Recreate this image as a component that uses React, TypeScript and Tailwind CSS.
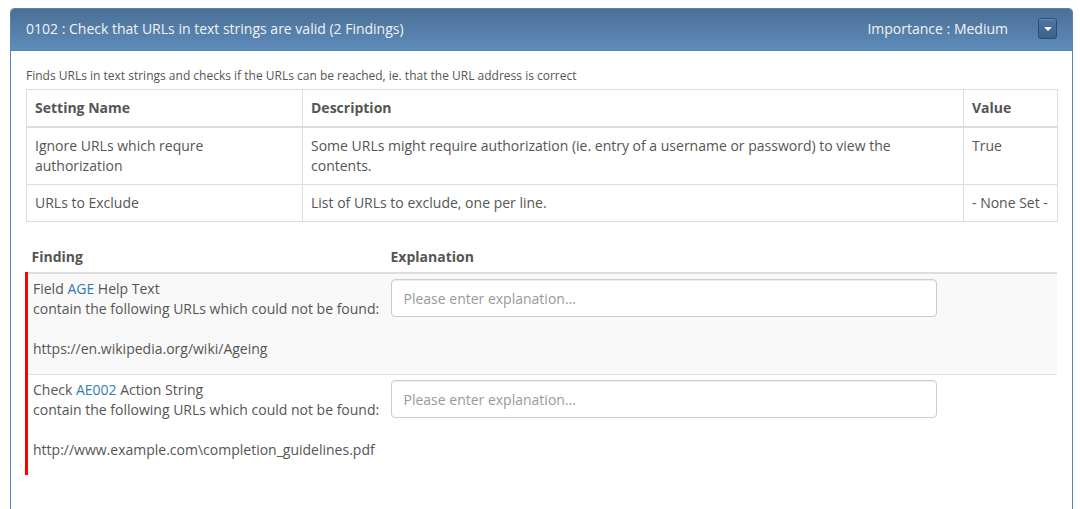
export default function App() {
  const settings = [
    {
      name: "Ignore URLs which requre authorization",
      desc: "Some URLs might require authorization (ie. entry of a username or password) to view the contents.",
      value: "True",
    },
    { name: "URLs to Exclude", desc: "List of URLs to exclude, one per line.", value: "- None Set -" },
  ];

  const findings = [
    { kind: "Field", code: "AGE", what: "Help Text", url: "https://en.wikipedia.org/wiki/Ageing", striped: true },
    { kind: "Check", code: "AE002", what: "Action String", url: "http://www.example.com\\completion_guidelines.pdf", striped: false },
  ];

  return (
    <div className="min-h-screen bg-white pt-2 text-[14px] leading-[20px] text-[#555]" style={{ fontFamily: '"Open Sans", "Liberation Sans", sans-serif' }}>
      <div className="ml-[10px] w-[1063px] rounded-t-[4px] border border-[#5384b3]">
        {/* heading */}
        <div className="flex items-center justify-between rounded-t-[3px] bg-gradient-to-b from-[#4a6f96] to-[#5f8cba] px-[15px] pt-[9px] pb-[11px] text-[#f2f2f2] border-b border-[#5384b3]">
          <span>0102 : Check that URLs in text strings are valid (2 Findings)</span>
          <div className="flex items-center">
            <span>Importance : Medium</span>
            <button className="ml-[30px] flex h-[21px] w-[19px] items-center justify-center rounded-[3px] border border-[#2d4d70] bg-gradient-to-b from-[#4d76a3] to-[#3c618b] shadow-[inset_0_1px_0_rgba(255,255,255,0.15)]">
              <span className="block h-0 w-0 border-x-[4px] border-t-[4px] border-x-transparent border-t-white" />
            </button>
          </div>
        </div>

        {/* body */}
        <div className="px-[15px] pt-[16px] pb-[15px]">
          <p className="mb-[5px] text-[12px] leading-[17px]">
            Finds URLs in text strings and checks if the URLs can be reached, ie. that the URL address is correct
          </p>

          <table className="w-[1031px] table-fixed border-collapse border border-[#ddd]">
            <colgroup>
              <col className="w-[276px]" />
              <col className="w-[661px]" />
              <col className="w-[94px]" />
            </colgroup>
            <thead>
              <tr className="border-b-2 border-[#ddd]">
                <th className="border border-[#ddd] p-2 text-left font-bold">Setting Name</th>
                <th className="border border-[#ddd] p-2 text-left font-bold">Description</th>
                <th className="border border-[#ddd] p-2 text-left font-bold">Value</th>
              </tr>
            </thead>
            <tbody>
              {settings.map((s) => (
                <tr key={s.name}>
                  <td className="border border-[#ddd] p-2 align-top">{s.name}</td>
                  <td className="border border-[#ddd] p-2 align-top">
                    <div className="max-w-[600px]">{s.desc}</div>
                  </td>
                  <td className="border border-[#ddd] p-2 align-top whitespace-nowrap">{s.value}</td>
                </tr>
              ))}
            </tbody>
          </table>

          <table className="mt-5 mb-5 -ml-px w-[1032px] table-fixed border-collapse">
            <colgroup>
              <col className="w-[359px]" />
              <col />
            </colgroup>
            <thead>
              <tr className="border-b-2 border-[#ddd]">
                <th className="py-[5px] pl-[5px] text-left font-bold">Finding</th>
                <th className="px-[5px] py-[5px] text-left font-bold">Explanation</th>
              </tr>
            </thead>
            <tbody>
              {findings.map((f) => (
                <tr key={f.code} className={`border-t border-[#ddd] ${f.striped ? "bg-[#f9f9f9]" : "bg-white"}`}>
                  <td className="border-l-[3px] border-[#f00] py-[5px] pl-[5px] align-top">
                    <p className="mb-[10px]">
                      {f.kind} <a className="text-[#337ab7]">{f.code}</a> {f.what}
                      <br />
                      contain the following URLs which could not be found:
                      <br />
                      <br />
                      {f.url}
                    </p>
                  </td>
                  <td className="px-[5px] py-[5px] align-top">
                    <input
                      placeholder="Please enter explanation..."
                      className="h-[38px] w-[546px] rounded-[4px] border border-[#ccc] bg-white px-3 text-[14px] text-[#555] placeholder:text-[#999] shadow-[inset_0_1px_1px_rgba(0,0,0,0.075)] outline-none"
                    />
                  </td>
                </tr>
              ))}
            </tbody>
          </table>
        </div>
      </div>
    </div>
  );
}
